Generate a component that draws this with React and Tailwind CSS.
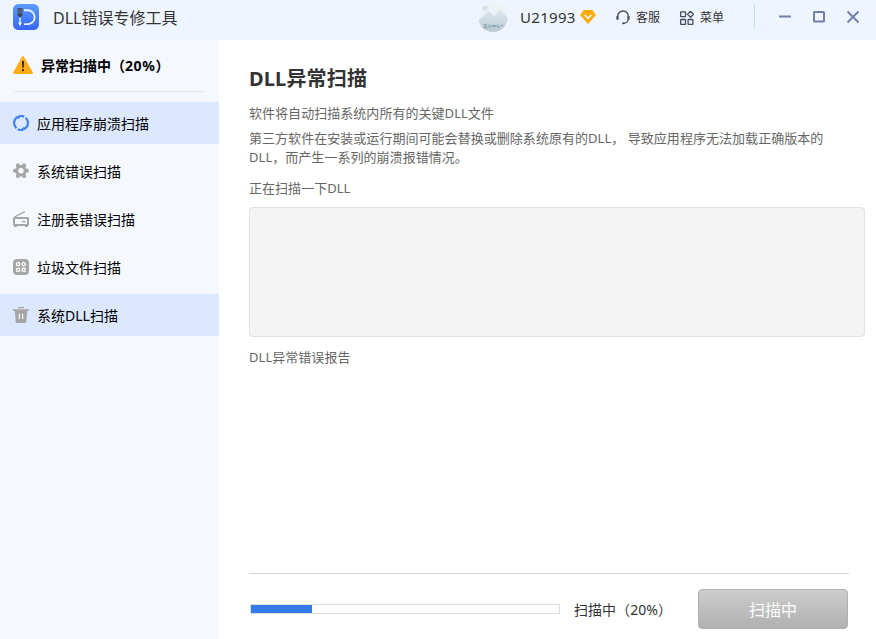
import React from 'react';

const LogoIcon = () => (
    <svg width="26" height="26" viewBox="0 0 26 26" className="shrink-0">
        <defs>
            <linearGradient id="logoBg" x1="0" y1="0" x2="0" y2="1">
                <stop offset="0" stopColor="#5b9dff" />
                <stop offset="1" stopColor="#3565fb" />
            </linearGradient>
        </defs>
        <rect width="26" height="26" rx="5.5" fill="url(#logoBg)" />
        <path d="M11 6.3H14.8A6.9 6.9 0 0 1 14.8 20.1H11" fill="none" stroke="#e6efff" strokeWidth="1.9" />
        <path d="M7 13V19" stroke="#fff" strokeWidth="1.3" />
        <path d="M5.3 18.5H8.7L7 22.5Z" fill="#fff" />
        <rect x="4.6" y="4" width="4.8" height="8" rx="0.6" fill="#39465a" />
        <path d="M6 4.5V10M8 4.5V10" stroke="#8593aa" strokeWidth="0.7" />
        <path d="M5.7 12H8.3L7.8 13.6H6.2Z" fill="#39465a" />
    </svg>
);

const AvatarIcon = () => (
    <svg width="30" height="30" viewBox="0 0 30 30" className="shrink-0">
        <defs>
            <clipPath id="avatarClip">
                <circle cx="15" cy="15" r="14.7" />
            </clipPath>
            <linearGradient id="avatarHill" x1="0" y1="0" x2="0" y2="1">
                <stop offset="0" stopColor="#dce7ed" />
                <stop offset="1" stopColor="#bccdd6" />
            </linearGradient>
        </defs>
        <g clipPath="url(#avatarClip)">
            <rect width="30" height="30" fill="#ecf2f5" />
            <circle cx="7" cy="6" r="2.6" fill="#d5e1e7" />
            <path d="M0 19L10.5 9L16 14.5L22 7.5L30 16V30H0Z" fill="url(#avatarHill)" />
            <path d="M0 24Q15 20 30 23V30H0Z" fill="#b8cad4" opacity="0.6" />
            <path d="M5.5 22.7H9M6 24.2H8.5M5.5 25.7H9.5M10.5 23.2L11.5 25.4L12.5 23.2M14 23L15 25L16 23L17 25L18 23M19.5 23.2V25.2H22M23 23.5H25" fill="none" stroke="#7b97a7" strokeWidth="0.8" />
        </g>
    </svg>
);

const VipIcon = () => (
    <svg width="16" height="14" viewBox="0 0 16 14" className="shrink-0">
        <path d="M3.7 0.5H12.3L15.5 4.9L8 13.5L0.5 4.9Z" fill="#ffab0c" stroke="#ffab0c" strokeWidth="1" strokeLinejoin="round" />
        <path d="M4.7 5L8 8.3L11.3 5" fill="none" stroke="#fff" strokeWidth="1.6" />
    </svg>
);

const HeadsetIcon = () => (
    <svg width="14" height="15" viewBox="0 0 14 15" fill="none" stroke="#454b58" className="shrink-0">
        <path d="M1.7 9.8V6.3A5.3 5.3 0 0 1 12.3 6.3V9.8" strokeWidth="1.4" />
        <path d="M1.4 6V9.6M12.6 6V9.6" strokeWidth="2" />
        <path d="M12.2 9.5C11.8 11.8 10.3 13.2 7.3 13.3" strokeWidth="1.3" />
        <path d="M6.3 13.3H8.5" strokeWidth="1.8" />
    </svg>
);

const MenuIcon = () => (
    <svg width="14" height="14" viewBox="0 0 14 14" fill="none" stroke="#454b58" strokeWidth="1.3" className="shrink-0">
        <rect x="0.7" y="0.9" width="4.8" height="4.8" rx="0.4" />
        <path d="M10.5 0.3L13.5 3.3L10.5 6.3L7.5 3.3Z" />
        <rect x="0.7" y="8.5" width="4.8" height="4.8" rx="0.4" />
        <rect x="8.1" y="8.5" width="4.8" height="4.8" rx="0.4" />
    </svg>
);

const WarningIcon = () => (
    <svg width="20" height="18" viewBox="0 0 20 18" className="shrink-0">
        <path d="M10 1.2L18.8 16.8H1.2Z" fill="#ffae1a" stroke="#ffae1a" strokeWidth="2.2" strokeLinejoin="round" />
        <path d="M9 5H11L10.7 11.8H9.3Z" fill="#222" />
        <circle cx="10" cy="14.2" r="1.1" fill="#222" />
    </svg>
);

const RefreshIcon = () => (
    <svg width="16" height="16" viewBox="0 0 16 16" fill="none" stroke="#3f83f1" strokeWidth="2.1" className="shrink-0">
        <path d="M3.4 13.2A7 7 0 0 1 5 1.7" />
        <path d="M12.6 2.8A7 7 0 0 1 11 14.3" />
        <path d="M5.6 1.4A7 7 0 0 1 11.2 1.8" />
        <path d="M10.4 14.6A7 7 0 0 1 4.8 14.2" />
        <path d="M4.6 1L7.6 1.4L5.4 4.6Z M11.4 15L8.4 14.6L10.6 11.4Z" fill="#3f83f1" stroke="none" />
    </svg>
);

const GearIcon = () => (
    <svg width="16" height="16" viewBox="0 0 16 16" className="shrink-0">
        <circle cx="8" cy="7.7" r="5.7" fill="#a6a6a6" />
        <path
            d="M2 7.7H14M4.9 2.4L11.1 13M11.1 2.4L4.9 13"
            fill="none"
            stroke="#a6a6a6"
            strokeWidth="4"
            strokeLinecap="round"
        />
        <circle cx="8" cy="7.7" r="2.7" fill="#f5f8ff" />
    </svg>
);

const RegistryIcon = () => (
    <svg width="16" height="16" viewBox="0 0 16 16" fill="none" stroke="#a6a6a6" className="shrink-0">
        <path d="M1.5 6L11.8 0.7" strokeWidth="1.4" />
        <rect x="1" y="7" width="14" height="7" rx="0.4" strokeWidth="2" />
        <path d="M9 10.5H12.5" strokeWidth="1.4" />
        <path d="M1 15.3H4M12 15.3H15" strokeWidth="1.2" />
    </svg>
);

const JunkIcon = () => (
    <svg width="16" height="16" viewBox="0 0 16 16" className="shrink-0">
        <rect width="16" height="16" rx="4" fill="#a6a6a6" />
        <g fill="none" stroke="#fff" strokeWidth="1.2">
            <rect x="3.8" y="3.8" width="2.8" height="2.8" />
            <path d="M10.7 3.2L12.7 5.2L10.7 7.2L8.7 5.2Z" />
            <rect x="3.8" y="9.4" width="2.8" height="2.8" />
            <rect x="9.3" y="9.4" width="2.8" height="2.8" />
        </g>
    </svg>
);

const TrashIcon = () => (
    <svg width="16" height="16" viewBox="0 0 16 16" className="shrink-0">
        <path d="M5 0H11V1.3H5ZM0 2.2H16V4H0Z" fill="#a6a6a6" />
        <path d="M1.8 4H14.2L13.3 14.8Q13.1 16 12 16H4Q2.9 16 2.7 14.8Z" fill="#a6a6a6" />
        <path d="M6.4 6.8V12M9.6 6.8V12" stroke="#f4f8ff" strokeWidth="1.2" />
    </svg>
);

const menuItems = [
    { label: '应用程序崩溃扫描', Icon: RefreshIcon, active: true },
    { label: '系统错误扫描', Icon: GearIcon, active: false },
    { label: '注册表错误扫描', Icon: RegistryIcon, active: false },
    { label: '垃圾文件扫描', Icon: JunkIcon, active: false },
    { label: '系统DLL扫描', Icon: TrashIcon, active: true },
];

const Header = () => (
    <header className="flex h-10 shrink-0 items-start bg-[#eef5ff] pl-[13px] text-[#333]">
        <div className="pt-1">
            <LogoIcon />
        </div>
        <h1 className="ml-3.5 mt-2 w-[425px] text-base leading-5 whitespace-nowrap">DLL错误专修工具</h1>
        <div className="mt-[2px]">
            <AvatarIcon />
        </div>
        <span className="ml-3 mt-[7px] w-[59px] text-[15px] leading-5 tracking-[0.3px] whitespace-nowrap">U21993</span>
        <div className="mt-2.5 ml-px">
            <VipIcon />
        </div>
        <button className="ml-5 mt-2 flex items-center text-xs leading-[18px] whitespace-nowrap">
            <HeadsetIcon />
            <span className="ml-[6px] pt-px">客服</span>
        </button>
        <button className="ml-5 mt-2 flex items-center text-xs leading-[18px] whitespace-nowrap">
            <MenuIcon />
            <span className="ml-[6px] pt-px">菜单</span>
        </button>
        <div className="ml-[30px] mt-1 h-[25px] w-px bg-[#c5ddfc]" />
        <svg width="82" height="14" viewBox="0 0 82 14" fill="none" stroke="#7180a8" strokeWidth="2" className="ml-6 mt-[10px] shrink-0">
            <path d="M0 6.5H12" />
            <rect x="35" y="2" width="10" height="9.5" rx="0.5" />
            <path d="M68.5 1.5L79.5 12.5M79.5 1.5L68.5 12.5" />
        </svg>
    </header>
);

const Sidebar = () => (
    <aside className="flex w-[219px] shrink-0 flex-col bg-[#f5f8ff] text-sm text-black">
        <div className="mr-[15px] ml-[14px] flex h-[52px] items-center border-b border-[#dfe6f5]">
            <div className="-ml-px -mt-px">
                <WarningIcon />
            </div>
            <span className="ml-2 font-bold whitespace-nowrap">
                异常扫描中（<span className="tracking-[0.6px]">20%</span>）
            </span>
        </div>
        <nav className="mt-2.5 flex flex-col gap-1.5">
            {menuItems.map(({ label, Icon, active }) => (
                <a
                    key={label}
                    className={active ? 'flex h-[42px] items-center bg-[#dce8ff] pl-[13px]' : 'flex h-[42px] items-center pl-[13px]'}
                >
                    <Icon />
                    <span className="ml-2 pt-0.5 leading-5 whitespace-nowrap">{label}</span>
                </a>
            ))}
        </nav>
    </aside>
);

const App = () => {
    const progress = 20;

    return (
        <div className="flex h-[639px] w-[876px] flex-col overflow-hidden bg-white font-['Noto_Sans','Noto_Sans_CJK_SC',sans-serif]">
            <Header />
            <div className="flex flex-1">
                <Sidebar />
                <main className="flex flex-1 flex-col pl-[30px] text-[13px] leading-[19px] tracking-[0.04px] text-[#666]">
                    <h2 className="mt-[25px] text-xl leading-7 font-bold tracking-[0.15px] text-[#333]">DLL异常扫描</h2>
                    <p className="mt-[11px]">软件将自动扫描系统内所有的关键DLL文件</p>
                    <p className="mt-1.5 whitespace-nowrap">
                        第三方软件在安装或运行期间可能会替换或删除系统原有的DLL， 导致应用程序无法加载正确版本的
                        <br />
                        DLL，而产生一系列的崩溃报错情况。
                    </p>
                    <p className="mt-3">正在扫描一下DLL</p>
                    <div className="mt-[9px] mr-[11px] h-[130px] rounded border border-[#e1e1e1] bg-[#f4f4f4]" />
                    <p className="mt-[11px]">DLL异常错误报告</p>

                    {/* Barra inferior */}
                    <footer className="mt-auto mr-[27px] flex h-[66px] border-t border-[#d4d4d4] pt-[15px]">
                        <div className="mt-[15px] ml-px h-2.5 w-[310px] border border-[#dedede] bg-white">
                            <div className="h-full bg-[#347be9]" style={{ width: `calc(${progress}% - 1px)` }} />
                        </div>
                        <span className="mt-[11px] ml-3.5 w-[124px] text-sm leading-5 whitespace-nowrap text-[#333]">扫描中（20%）</span>
                        <button className="h-10 w-[150px] rounded border border-[#b0b0b0] bg-linear-to-b from-[#cdcdcd] to-[#b0b0b0] pt-0.5 text-base tracking-normal text-white">
                            扫描中
                        </button>
                    </footer>
                </main>
            </div>
        </div>
    );
};

export default App;
